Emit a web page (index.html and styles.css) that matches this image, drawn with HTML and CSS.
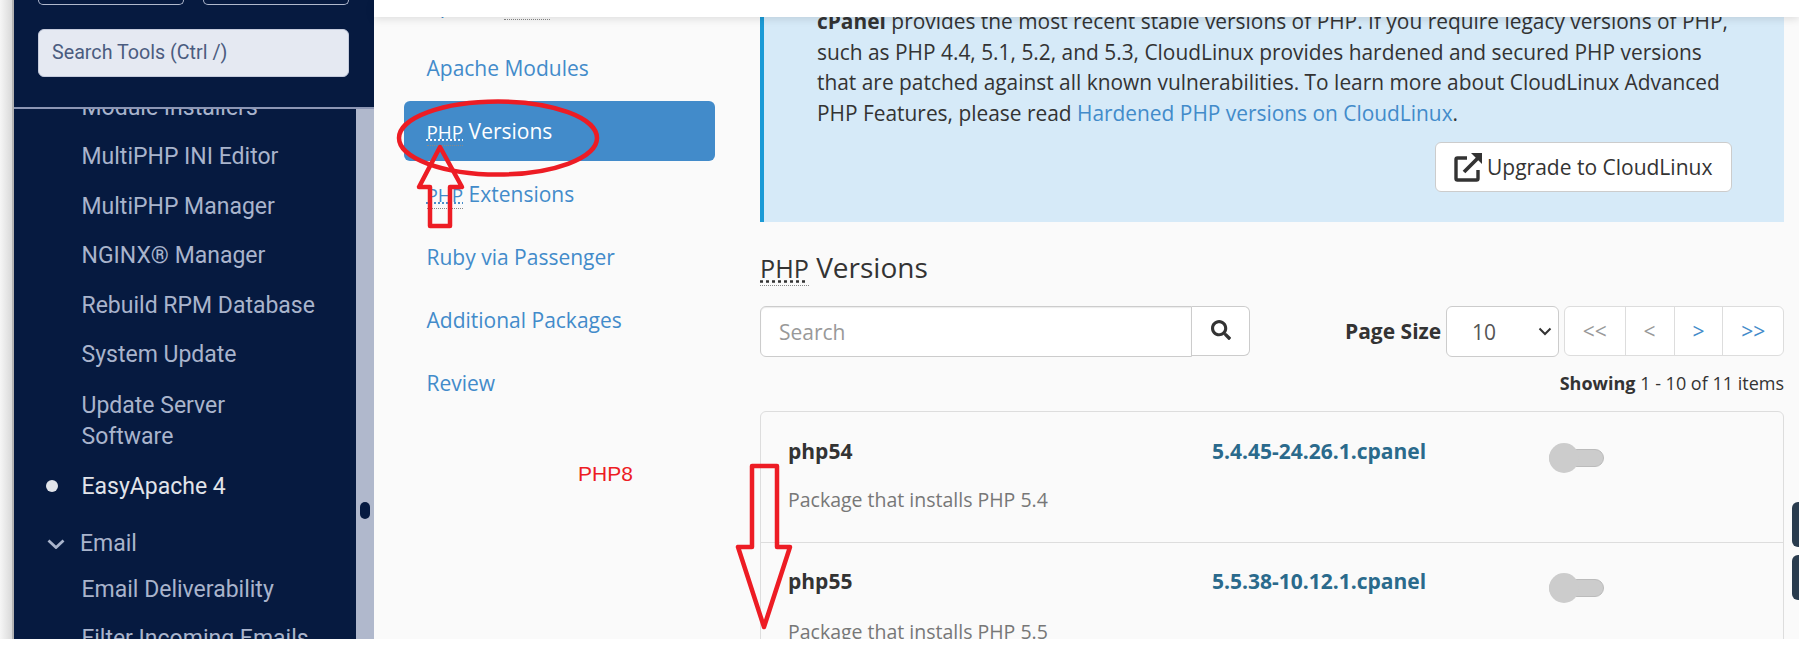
FILE: index.html
```html
<!DOCTYPE html>
<html lang="en">

<head>
    <meta charset="UTF-8">
    <title>PHP Versions</title>
    <link rel="stylesheet" href="styles.css">
</head>

<body>
    <div class="app">
        <div class="strip"></div>

        <aside class="sidebar">
            <div class="sidebar-head">
                <div class="head-buttons">
                    <div class="head-button"></div>
                    <div class="head-button"></div>
                </div>
                <input class="tool-search" type="text" placeholder="Search Tools (Ctrl /)">
            </div>
            <div class="sidebar-body">
                <ul class="tools">
                    <li>Module Installers</li>
                    <li>MultiPHP INI Editor</li>
                    <li>MultiPHP Manager</li>
                    <li>NGINX® Manager</li>
                    <li>Rebuild RPM Database</li>
                    <li>System Update</li>
                    <li class="two-lines">Update Server<br>Software</li>
                    <li class="current">EasyApache 4</li>
                    <li class="group">
                        <svg class="chevron" viewBox="0 0 18 10" width="18" height="10">
                            <path d="M1.5 1.5 9 8.5l7.5-7" fill="none" stroke="#a9b4cc" stroke-width="2.8" />
                        </svg>
                        Email
                    </li>
                    <li>Email Deliverability</li>
                    <li>Filter Incoming Emails</li>
                </ul>
                <div class="track">
                    <div class="thumb"></div>
                </div>
            </div>
        </aside>

        <main class="main">
            <div class="topbar"></div>
            <div class="page">
                <nav class="steps">
                    <a>Apache <abbr>MPM</abbr></a>
                    <a>Apache Modules</a>
                    <a class="active"><abbr>PHP</abbr> Versions</a>
                    <a><abbr>PHP</abbr> Extensions</a>
                    <a>Ruby via Passenger</a>
                    <a>Additional Packages</a>
                    <a>Review</a>
                </nav>

                <section class="content">
                    <div class="callout">
                        <p><b>cPanel</b> provides the most recent stable versions of PHP. If you require legacy versions of PHP,<br>
                            such as PHP 4.4, 5.1, 5.2, and 5.3, CloudLinux provides hardened and secured PHP versions<br>
                            that are patched against all known vulnerabilities. To learn more about CloudLinux Advanced<br>
                            PHP Features, please read <a>Hardened PHP versions on CloudLinux</a>.</p>
                        <div class="callout-action">
                            <button class="upgrade" type="button">
                                <svg viewBox="0 0 28 29" width="28" height="29">
                                    <path d="M13 5H3.5A1.5 1.5 0 0 0 2 6.500V25.500A1.500 1.500 0 0 0 3.500 27H22.500A1.500 1.500 0 0 0 24 25.500V17" fill="none" stroke="#333" stroke-width="3.400" />
                                    <path d="M10 19 24 5" fill="none" stroke="#333" stroke-width="3.800" />
                                    <path d="M17 0H28V11Z" fill="#333" />
                                </svg>
                                Upgrade to CloudLinux
                            </button>
                        </div>
                    </div>

                    <h2><abbr>PHP</abbr> Versions</h2>

                    <div class="toolbar">
                        <div class="search">
                            <input type="text" placeholder="Search">
                            <button type="button">
                                <svg viewBox="0 0 512 512" width="20" height="20">
                                    <path fill="#333" d="M505 442.700L405.300 343c-4.500-4.500-10.600-7-17-7H372c27.600-35.300 44-79.700 44-128C416 93.100 322.900 0 208 0S0 93.100 0 208s93.100 208 208 208c48.300 0 92.700-16.400 128-44v16.300c0 6.400 2.500 12.500 7 17l99.700 99.700c9.400 9.400 24.600 9.400 33.900 0l28.300-28.300c9.400-9.400 9.400-24.600.1-34zM208 336c-70.700 0-128-57.200-128-128 0-70.700 57.200-128 128-128 70.700 0 128 57.200 128 128 0 70.700-57.200 128-128 128z" />
                                </svg>
                            </button>
                        </div>
                        <label class="page-size">Page Size</label>
                        <div class="size-wrap">
                            <select class="size-select">
                                <option>10</option>
                            </select>
                            <svg class="size-arrow" viewBox="0 0 14 9" width="14" height="9">
                                <path d="M1.500 1.500 7 7l5.500-5.500" fill="none" stroke="#333" stroke-width="2" />
                            </svg>
                        </div>
                        <div class="pager">
                            <span class="off">&lt;&lt;</span>
                            <span class="off">&lt;</span>
                            <span>&gt;</span>
                            <span>&gt;&gt;</span>
                        </div>
                    </div>

                    <p class="showing"><b>Showing</b> 1 - 10 of 11 items</p>

                    <div class="packages">
                        <div class="package">
                            <div class="package-top">
                                <b class="name">php54</b>
                                <a class="version">5.4.45-24.26.1.cpanel</a>
                                <div class="toggle"></div>
                            </div>
                            <p class="desc">Package that installs PHP 5.4</p>
                        </div>
                        <div class="package">
                            <div class="package-top">
                                <b class="name">php55</b>
                                <a class="version">5.5.38-10.12.1.cpanel</a>
                                <div class="toggle"></div>
                            </div>
                            <p class="desc">Package that installs PHP 5.5</p>
                        </div>
                    </div>
                </section>

                <div class="side-tabs">
                    <div class="side-tab"></div>
                    <div class="side-tab"></div>
                </div>
            </div>
        </main>
    </div>

    <!-- red marks drawn over the screenshot -->
    <svg class="marks" viewBox="0 0 1799 648" width="1799" height="648">
        <g fill="none" stroke="#ed1c24" stroke-width="4.500" stroke-linejoin="round">
            <ellipse cx="498" cy="138" rx="99" ry="36.500" />
            <path d="M440 147 462 187H450V226H430V187H419Z" />
            <path d="M752 466H777V547H790L764 627 738 547H752Z" />
        </g>
    </svg>
    <span class="mark-label">PHP8</span>
</body>

</html>
```

FILE: styles.css
```css
* {
    box-sizing: border-box;
}

html,
body {
    margin: 0;
    height: 648px;
    overflow: hidden;
    background-color: #fff;
}

body {
    position: relative;
    font-family: "Open Sans", sans-serif;
    color: #333;
}

abbr {
    font-size: 90%;
    text-decoration: underline dotted;
    border-bottom: 1px dotted #888;
}

.app {
    display: flex;
    height: 639px;
    overflow: hidden;
}

.strip {
    width: 14px;
    flex-shrink: 0;
    background: linear-gradient(to right, #f6f6f6, #d9d9d9);
    border-right: 2px solid #b3b3b3;
}

/* left tool list */
.sidebar {
    width: 360px;
    flex-shrink: 0;
    display: flex;
    flex-direction: column;
    background-color: #061a40;
    font-family: Roboto, sans-serif;
}

.sidebar-head {
    height: 109px;
    flex-shrink: 0;
    padding: 0 25px 0 24px;
    border-bottom: 2px solid #8c96b4;
    position: relative;
    z-index: 1;
    background-color: #061a40;
}

.head-buttons {
    display: flex;
    gap: 19px;
    height: 5px;
}

.head-button {
    flex: 1;
    border: 1px solid #b0b8cc;
    border-top: none;
    border-radius: 0 0 5px 5px;
}

.tool-search {
    display: block;
    width: 100%;
    height: 48px;
    margin-top: 24px;
    padding: 0 13px 2px;
    font-family: Roboto, sans-serif;
    font-size: 19.700px;
    background-color: #e5e9f2;
    border: 1px solid #c5cbdc;
    border-radius: 6px;
}

.tool-search::placeholder {
    color: #4b5c80;
    opacity: 1;
}

.sidebar-body {
    flex: 1;
    display: flex;
    min-height: 0;
    overflow: hidden;
}

.tools {
    flex: 1;
    list-style: none;
    margin: -26.500px 0 0;
    padding: 0;
    font-size: 23px;
    color: #a9b4cc;
}

.tools li {
    height: 49.500px;
    line-height: 49.500px;
    padding-left: 67.500px;
    white-space: nowrap;
}

.tools li.two-lines {
    height: 81px;
    line-height: 31px;
    padding-top: 10px;
}

.tools li.current {
    height: 56px;
    line-height: 52px;
    color: #e1e4ea;
    position: relative;
}

.tools li.current::before {
    content: "";
    position: absolute;
    left: 32px;
    top: 19px;
    width: 12px;
    height: 12px;
    border-radius: 50%;
    background-color: #e1e4ea;
}

.tools li.group {
    display: flex;
    align-items: center;
    gap: 15px;
    padding-left: 33px;
    height: 48px;
    padding-top: 7px;
}

.track {
    width: 18px;
    flex-shrink: 0;
    padding-top: 393px;
    padding-left: 4px;
    background-color: #b0b8cc;
}

.thumb {
    width: 10px;
    height: 17px;
    border-radius: 5px;
    background-color: #061a40;
}

/* main area */
.main {
    flex: 1;
    min-width: 0;
    display: flex;
    flex-direction: column;
    background-color: #fafafa;
}

.topbar {
    height: 17px;
    flex-shrink: 0;
    background-color: #fff;
    box-shadow: 0 2px 8px rgba(0, 0, 0, 0.12);
    position: relative;
    z-index: 2;
}

.page {
    flex: 1;
    min-height: 0;
    display: flex;
    overflow: hidden;
    padding-left: 30px;
}

.steps {
    width: 311px;
    flex-shrink: 0;
    margin-top: -42px;
    display: flex;
    flex-direction: column;
    gap: 3px;
    font-size: 21px;
    color: #428bca;
}

.steps a {
    height: 60px;
    line-height: 61px;
    padding-left: 22.500px;
    border-radius: 6px;
    flex-shrink: 0;
}

.steps a.active {
    background-color: #428bca;
    color: #fff;
    line-height: 60px;
}

.content {
    width: 1024px;
    flex-shrink: 0;
    margin-left: 45px;
}

.callout {
    margin-top: -11px;
    padding: 0 52px 30px 53px;
    background-color: #d6eaf8;
    border-left: 4px solid #1b9ad6;
    font-size: 20.900px;
    line-height: 30.500px;
}

.callout p {
    margin: 0;
    white-space: nowrap;
}

.callout a {
    color: #428bca;
}

.callout-action {
    display: flex;
    justify-content: flex-end;
    margin-top: 14px;
}

.upgrade {
    display: flex;
    align-items: center;
    gap: 5px;
    width: 297px;
    height: 50px;
    padding: 0 0 0 18px;
    font-family: inherit;
    font-size: 21px;
    color: #333;
    background-color: #fff;
    border: 1px solid #ccc;
    border-radius: 6px;
}

h2 {
    margin: 25px 0 18px;
    font-size: 28px;
    font-weight: 400;
    line-height: 40px;
}

.toolbar {
    display: flex;
    align-items: flex-start;
    height: 51px;
}

.search {
    display: flex;
    width: 490px;
}

.search input {
    width: 432px;
    height: 51px;
    padding: 0 18px;
    font-family: inherit;
    font-size: 21px;
    background-color: #fff;
    border: 1px solid #ccc;
    border-radius: 6px 0 0 6px;
    box-shadow: inset 0 1px 1px rgba(0, 0, 0, 0.08);
}

.search input::placeholder {
    color: #999;
    opacity: 1;
}

.search button {
    width: 58px;
    height: 50px;
    padding: 0;
    background-color: #fff;
    border: 1px solid #ccc;
    border-left: none;
    border-radius: 0 6px 6px 0;
}

.page-size {
    margin-left: 95px;
    width: 101px;
    font-size: 21px;
    font-weight: 700;
    line-height: 51px;
    white-space: nowrap;
}

.size-wrap {
    position: relative;
    width: 113px;
    height: 51px;
}

.size-select {
    width: 100%;
    height: 100%;
    padding-left: 25px;
    font-family: inherit;
    font-size: 21px;
    color: #555;
    background-color: #fff;
    border: 1px solid #ccc;
    border-radius: 6px;
    appearance: none;
}

.size-arrow {
    position: absolute;
    right: 7px;
    top: 21px;
}

.pager {
    display: flex;
    width: 220px;
    height: 50px;
    margin-left: 5px;
    background-color: #fff;
    border: 1px solid #ddd;
    border-radius: 6px;
    font-size: 21px;
    color: #428bca;
}

.pager span {
    flex: 1;
    display: flex;
    align-items: center;
    justify-content: center;
    border-left: 1px solid #ddd;
}

.pager span:first-child {
    flex: 1.250;
    border-left: none;
}

.pager span:last-child {
    flex: 1.250;
}

.pager .off {
    color: #999;
}

.showing {
    margin: 13px 0 15px;
    font-size: 18px;
    line-height: 26px;
    text-align: right;
}

.packages {
    border: 1px solid #ddd;
    border-radius: 6px 6px 0 0;
}

.package {
    height: 131px;
    padding: 26px 0 0 27px;
    border-bottom: 1px solid #ddd;
}

.package + .package {
    padding-top: 25px;
}

.package-top {
    display: grid;
    grid-template-columns: 424px 337px 60px;
    font-size: 21px;
    line-height: 26px;
}

.version {
    color: #2a6a8c;
    font-weight: 700;
}

.toggle {
    position: relative;
    width: 55px;
    height: 18px;
    margin-top: 11px;
    background-color: #ccc;
    border: 1px solid #bbb;
    border-radius: 9px;
}

.toggle::before {
    content: "";
    position: absolute;
    left: -1px;
    top: -7px;
    width: 30px;
    height: 30px;
    border-radius: 50%;
    background-color: #ccc;
}

.desc {
    margin: 20px 0 0;
    font-size: 19.500px;
    line-height: 26px;
    color: #777;
}

.package + .package .desc {
    margin-top: 22px;
}

.side-tabs {
    margin: 485px 0 0 8px;
    display: flex;
    flex-direction: column;
    gap: 8px;
    flex-shrink: 0;
    width: 7px;
}

.side-tab {
    height: 45px;
    background-color: #2a3c4e;
    border-radius: 6px 0 0 6px;
}

/* annotations */
.marks {
    position: absolute;
    left: 0;
    top: 0;
    pointer-events: none;
}

.mark-label {
    position: absolute;
    left: 578px;
    top: 461px;
    font-family: "Liberation Sans", sans-serif;
    font-size: 21px;
    line-height: 26px;
    color: #ed1c24;
}
```
